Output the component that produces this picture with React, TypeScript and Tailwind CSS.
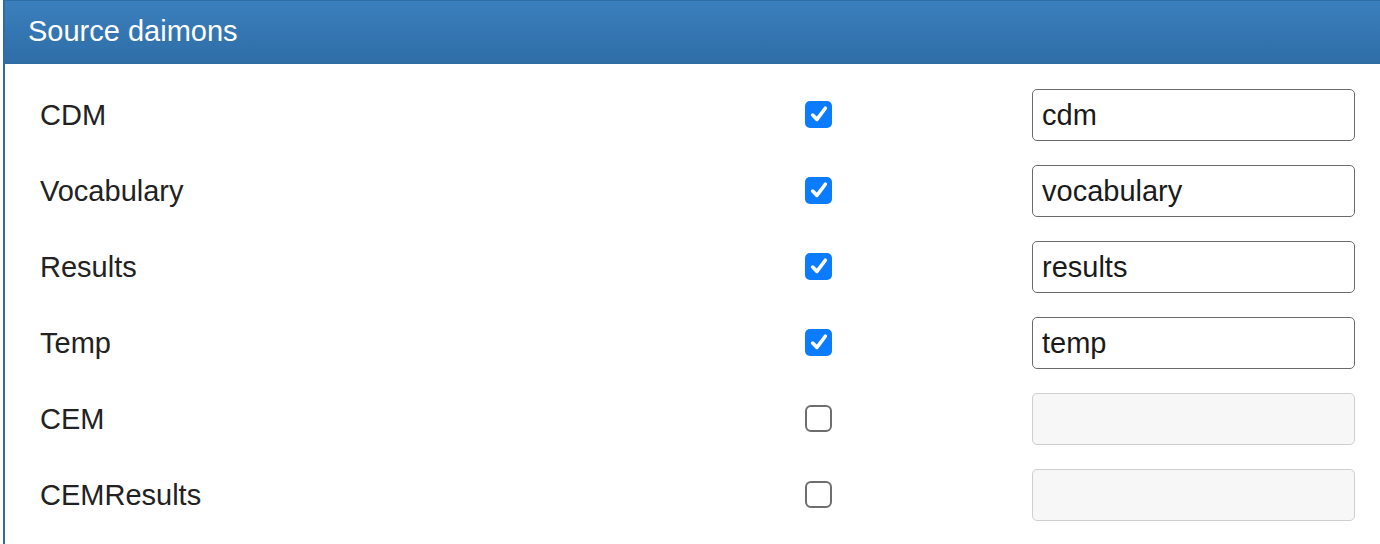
const rows = [
  { label: "CDM", checked: true, value: "cdm" },
  { label: "Vocabulary", checked: true, value: "vocabulary" },
  { label: "Results", checked: true, value: "results" },
  { label: "Temp", checked: true, value: "temp" },
  { label: "CEM", checked: false, value: "" },
  { label: "CEMResults", checked: false, value: "" },
];

function Check({ checked }: { checked: boolean }) {
  if (!checked) {
    return (
      <span className="block h-[27px] w-[27px] rounded-[6px] border-2 border-[#6e6e6e] bg-white" />
    );
  }
  return (
    <span className="flex h-[27px] w-[27px] items-center justify-center rounded-[5px] bg-[#0b7bff]">
      <svg viewBox="0 0 16 16" className="h-[22px] w-[22px]">
        <path
          d="M3.4 8.8 L6.5 11.9 L12.6 3.8"
          fill="none"
          stroke="white"
          strokeWidth="2.6"
          strokeLinecap="round"
          strokeLinejoin="round"
        />
      </svg>
    </span>
  );
}

export default function App() {
  return (
    <div
      className="h-[544px] w-[1380px] overflow-hidden bg-white pl-[3px]"
      style={{ fontFamily: '"Liberation Sans", Arial, sans-serif' }}
    >
      <section className="border-l-2 border-t border-[#2e6da4]">
        {/* Heading */}
        <div className="flex h-[63px] items-center border-b-2 border-[#2e6da4] bg-gradient-to-b from-[#3a7fbd] to-[#2f6ea7] pl-[23px] pt-[1px] text-[29px] text-white">
          Source daimons
        </div>

        {/* Rows */}
        <div className="pt-[12px] pb-[20px] pl-[35px]">
          {rows.map((row) => (
            <div key={row.label} className="flex h-[76px] items-center">
              <div className="w-[765px] pt-[3px] text-[29px] text-[#222]">{row.label}</div>
              <div className="w-[227px]">
                <Check checked={row.checked} />
              </div>
              {row.checked ? (
                <div className="mt-[2px] flex h-[52px] w-[323px] items-center rounded-[5px] border border-[#6b6b6b] bg-white px-[9px] pt-[2px] text-[29px] text-[#1a1a1a]">
                  {row.value}
                </div>
              ) : (
                <div className="mt-[2px] h-[52px] w-[323px] rounded-[5px] border border-[#cfcfcf] bg-[#f7f7f7]" />
              )}
            </div>
          ))}
        </div>
      </section>
    </div>
  );
}
